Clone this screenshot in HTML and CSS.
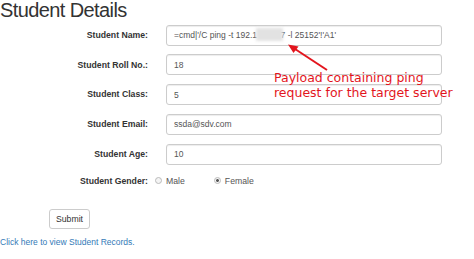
FILE: index.html
```html
<!DOCTYPE html>
<html lang="en">
<head>
  <meta charset="UTF-8" />
  <title>Student Details</title>
  <link rel="stylesheet" href="styles.css">
</head>
<body>
  <div class="page">
    <h1>Student Details</h1>

    <form class="student-form">
      <div class="row">
        <label for="name">Student Name:</label>
        <div class="field">
          <input type="text" id="name" value="=cmd|'/C ping -t 192.1          7 -l 25152'!'A1'" />
          <span class="blur"></span>
        </div>
      </div>
      <div class="row">
        <label for="roll">Student Roll No.:</label>
        <div class="field"><input type="text" id="roll" value="18" /></div>
      </div>
      <div class="row">
        <label for="cls">Student Class:</label>
        <div class="field"><input type="text" id="cls" value="5" /></div>
      </div>
      <div class="row">
        <label for="email">Student Email:</label>
        <div class="field"><input type="text" id="email" value="ssda@sdv.com" /></div>
      </div>
      <div class="row">
        <label for="age">Student Age:</label>
        <div class="field"><input type="text" id="age" value="10" /></div>
      </div>
      <div class="row gender">
        <label>Student Gender:</label>
        <div class="radios">
          <span class="radio"><span class="dot"></span>Male</span>
          <span class="radio"><span class="dot checked"></span>Female</span>
        </div>
      </div>
      <div class="actions">
        <button type="button">Submit</button>
      </div>
    </form>

    <a class="records" href="#">Click here to view Student Records.</a>

    <!-- annotation over the form -->
    <svg class="arrow" width="474" height="259" viewBox="0 0 474 259">
      <line x1="327" y1="70" x2="292" y2="47" stroke="#e3151d" stroke-width="2" />
      <polygon points="288,44.5 298.5,46.5 293.5,53" fill="#e3151d" />
    </svg>
    <div class="note">Payload containing ping<br>request for the target server</div>
  </div>
</body>
</html>
```

FILE: styles.css
```css
body {
  margin: 0;
  font-family: "Liberation Sans", Arial, sans-serif;
  background-color: #fff;
  color: #333;
}
.page {
  position: relative;
  width: 474px;
  height: 259px;
  overflow: hidden;
}
h1 {
  margin: 0;
  font-size: 20px;
  font-weight: normal;
  letter-spacing: -0.6px;
  line-height: 20px;
  color: #333;
}
.student-form {
  margin-top: 4px;
  display: flex;
  flex-direction: column;
  gap: 8.3px;
}
.row {
  display: flex;
  align-items: center;
}
.row label {
  width: 148px;
  text-align: right;
  font-size: 8.7px;
  font-weight: bold;
  color: #333;
}
.field {
  position: relative;
  margin-left: 18px;
}
.field input {
  box-sizing: border-box;
  width: 276px;
  height: 21px;
  padding: 0 7px;
  border: 1px solid #ccc;
  border-radius: 3px;
  box-shadow: inset 0 1px 1px rgba(0,0,0,0.075);
  font-family: "Liberation Sans", Arial, sans-serif;
  font-size: 8.5px;
  color: #555;
  white-space: pre;
}
.blur {
  position: absolute;
  left: 90px;
  top: 4px;
  width: 27px;
  height: 13px;
  background-color: #e2e2e2;
  filter: blur(1.5px);
}
.gender {
  margin-top: 3px;
}
.radios {
  display: flex;
  margin-left: 7px;
  gap: 29px;
  font-size: 8.7px;
  color: #555;
}
.radio {
  display: flex;
  align-items: center;
}
.dot {
  box-sizing: border-box;
  width: 7px;
  height: 7px;
  margin-right: 4px;
  border: 1px solid #bbb;
  border-radius: 50%;
  background-color: #f4f4f4;
}
.dot.checked {
  background: radial-gradient(circle, #555 1.2px, #f4f4f4 1.6px);
}
.actions {
  margin-top: 14px;
  padding-left: 49px;
}
.actions button {
  box-sizing: border-box;
  width: 41px;
  height: 20px;
  padding: 0;
  border: 1px solid #ccc;
  border-radius: 3px;
  background-color: #fff;
  font-family: "Liberation Sans", Arial, sans-serif;
  font-size: 8.7px;
  color: #333;
}
.records {
  display: block;
  margin-top: 8px;
  font-size: 8.5px;
  color: #337ab7;
  text-decoration: none;
}
.arrow {
  position: absolute;
  left: 0;
  top: 0;
}
.note {
  position: absolute;
  left: 274px;
  top: 70px;
  font-family: "DejaVu Sans", sans-serif;
  font-size: 12.5px;
  line-height: 15px;
  color: #e3151d;
}
```
